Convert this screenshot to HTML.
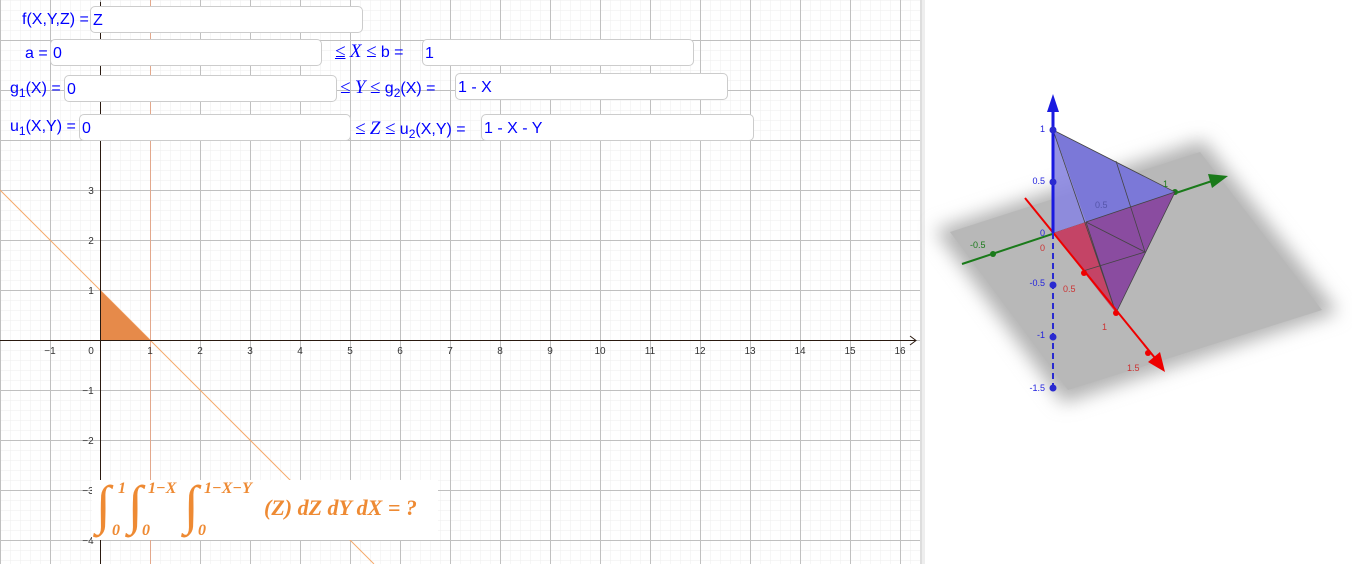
<!DOCTYPE html>
<html><head><meta charset="utf-8"><style>
body{margin:0;width:1352px;height:564px;overflow:hidden;background:#fff;font-family:"Liberation Sans",sans-serif;position:relative}
.box{position:absolute;height:27px;border:1px solid #ccc;border-radius:5px;background:#fff;color:#00f;font-size:16px;line-height:27px;padding-left:2px;box-sizing:border-box}
.lb{position:absolute;color:#00f;font-size:16px;white-space:nowrap}
.m{font-family:"Liberation Serif",serif;font-style:italic;font-size:19px}
sub{font-size:12px;vertical-align:-4px}
</style></head><body>
<svg width="1352" height="564" style="position:absolute;left:0;top:0">
<defs>
<pattern id="mn" x="0" y="0" width="10" height="10" patternUnits="userSpaceOnUse"><path d="M0 0V10M0 0H10" stroke="#eeeeee" stroke-width="1" fill="none"/></pattern>
<pattern id="mj" x="0" y="40" width="50" height="50" patternUnits="userSpaceOnUse"><path d="M0.5 0V50M0 0.5H50" stroke="#c0c0c0" stroke-width="1" fill="none"/></pattern>
<filter id="bl"><feGaussianBlur stdDeviation="9"/></filter>
</defs>
<rect x="0" y="0" width="920" height="564" fill="url(#mn)"/>
<rect x="0" y="0" width="920" height="564" fill="url(#mj)"/>
<rect x="920" y="0" width="5" height="564" fill="#eee"/>
<line x1="921" y1="0" x2="921" y2="564" stroke="#ccc"/>
<line x1="150.5" y1="0" x2="150.5" y2="564" stroke="#e3a88c"/>
<line x1="0" y1="190" x2="374" y2="564" stroke="#f5a96b"/>
<polygon points="100,290 100,340 150,340" fill="#e68a4a"/>
<line x1="100.5" y1="290" x2="100.5" y2="340" stroke="#d33"/>
<line x1="0" y1="340.5" x2="916" y2="340.5" stroke="#2a1a10"/>
<line x1="100.5" y1="2" x2="100.5" y2="564" stroke="#2a1a10"/>
<path d="M910 336L916 340.5L910 345" stroke="#2a1a10" fill="none"/>
<g font-size="10" fill="#333" text-anchor="middle">
<text x="50" y="354">−1</text><text x="91" y="354">0</text><text x="150" y="354">1</text><text x="200" y="354">2</text><text x="250" y="354">3</text><text x="300" y="354">4</text><text x="350" y="354">5</text><text x="400" y="354">6</text><text x="450" y="354">7</text><text x="500" y="354">8</text><text x="550" y="354">9</text><text x="600" y="354">10</text><text x="650" y="354">11</text><text x="700" y="354">12</text><text x="750" y="354">13</text><text x="800" y="354">14</text><text x="850" y="354">15</text><text x="900" y="354">16</text>
<text x="91" y="194">3</text><text x="91" y="244">2</text><text x="91" y="294">1</text><text x="88" y="394">−1</text><text x="88" y="444">−2</text><text x="88" y="494">−3</text><text x="88" y="544">−4</text>
</g>
<rect x="92" y="480" width="346" height="60" fill="#fff"/>
<!-- 3D -->
<polygon points="935,230 1203,140 1338,312 1063,403" fill="#b3b3b3" filter="url(#bl)"/>
<polygon points="950,232 1200,152 1322,310 1068,390" fill="#b8b8b8"/>
<line x1="962" y1="264" x2="1215" y2="180" stroke="#1a7a1a" stroke-width="2"/>
<polygon points="1228,176 1208,174 1212,188" fill="#1a7a1a"/>
<circle cx="993" cy="254" r="3" fill="#1a7a1a"/><circle cx="1175" cy="192" r="3" fill="#1a7a1a"/>
<polygon points="1053,130 1175,192 1086,222" fill="#7b78d8"/>
<polygon points="1053,130 1086,222 1053,233" fill="#8a86e0" opacity=".9"/>
<polygon points="1053,233 1086,222 1116,313" fill="#c44466"/>
<polygon points="1086,222 1175,192 1116,313" fill="#8a4ca0"/>
<g stroke="#444" stroke-width=".8" fill="none"><path d="M1053 130L1175 192L1116 313L1053 130M1086 222L1116 313M1086 222L1175 192M1116 161L1145 252L1086 222M1083 271L1145 252"/></g>
<line x1="1025" y1="198" x2="1155" y2="358" stroke="#e00" stroke-width="2"/>
<polygon points="1165,372 1148,362 1160,352" fill="#e00"/>
<circle cx="1084" cy="273" r="3" fill="#e00"/><circle cx="1116" cy="313" r="3" fill="#e00"/><circle cx="1148" cy="353" r="3" fill="#e00"/>
<line x1="1053" y1="233" x2="1053" y2="390" stroke="#2a2ad0" stroke-width="2" stroke-dasharray="6,4"/>
<line x1="1053" y1="108" x2="1053" y2="233" stroke="#1a1ae0" stroke-width="3"/>
<polygon points="1053,94 1047,112 1059,112" fill="#1a1ae0"/>
<g fill="#2a2ad0"><circle cx="1053" cy="130" r="3.5"/><circle cx="1053" cy="182" r="3.5"/><circle cx="1053" cy="285" r="3.5"/><circle cx="1053" cy="337" r="3.5"/><circle cx="1053" cy="388" r="3.5"/></g>
<g font-size="9"><g fill="#22d" text-anchor="end"><text x="1045" y="132">1</text><text x="1045" y="184">0.5</text><text x="1045" y="236">0</text><text x="1045" y="286">-0.5</text><text x="1045" y="338">-1</text><text x="1045" y="391">-1.5</text></g>
<g fill="#c33"><text x="1040" y="251">0</text><text x="1063" y="292">0.5</text><text x="1102" y="330">1</text><text x="1127" y="371">1.5</text></g>
<g fill="#1a7a1a"><text x="970" y="248">-0.5</text><text x="1163" y="187">1</text></g>
<text x="1095" y="208" fill="#55a">0.5</text></g>
</svg>
<div class="lb" style="left:22px;top:11px">f(X,Y,Z) =</div>
<div class="box" style="left:90px;top:6px;width:273px">Z</div>
<div class="lb" style="left:25px;top:45px">a =</div>
<div class="box" style="left:50px;top:39px;width:272px">0</div>
<div class="lb" style="left:335px;top:41px"><span class="m" style="text-decoration:underline">≤</span> <span class="m">X</span> <span class="m">≤</span> b =</div>
<div class="box" style="left:422px;top:39px;width:272px">1</div>
<div class="lb" style="left:10px;top:80px">g<sub>1</sub>(X) =</div>
<div class="box" style="left:64px;top:75px;width:273px">0</div>
<div class="lb" style="left:340px;top:77px"><span class="m">≤</span> <span class="m">Y</span> <span class="m">≤</span> g<sub>2</sub>(X) =</div>
<div class="box" style="left:455px;top:73px;width:273px">1 - X</div>
<div class="lb" style="left:10px;top:118px">u<sub>1</sub>(X,Y) =</div>
<div class="box" style="left:79px;top:114px;width:272px">0</div>
<div class="lb" style="left:355px;top:118px"><span class="m">≤</span> <span class="m">Z</span> <span class="m">≤</span> u<sub>2</sub>(X,Y) =</div>
<div class="box" style="left:481px;top:114px;width:273px">1 - X - Y</div>
<div style="position:absolute;left:96px;top:478px;color:#ee8a33;font-family:'Liberation Serif',serif;font-weight:bold;font-style:italic;white-space:nowrap">
<span style="position:absolute;left:0;top:-4px;font-size:54px;font-style:normal;font-weight:normal">∫</span>
<span style="position:absolute;left:22px;top:2px;font-size:16px">1</span><span style="position:absolute;left:16px;top:44px;font-size:16px">0</span>
<span style="position:absolute;left:32px;top:-4px;font-size:54px;font-style:normal;font-weight:normal">∫</span>
<span style="position:absolute;left:52px;top:2px;font-size:16px">1−X</span><span style="position:absolute;left:46px;top:44px;font-size:16px">0</span>
<span style="position:absolute;left:88px;top:-4px;font-size:54px;font-style:normal;font-weight:normal">∫</span>
<span style="position:absolute;left:108px;top:2px;font-size:16px">1−X−Y</span><span style="position:absolute;left:102px;top:44px;font-size:16px">0</span>
<span style="position:absolute;left:168px;top:17px;font-size:22px">(Z) dZ dY dX = ?</span>
</div>
</body></html>
